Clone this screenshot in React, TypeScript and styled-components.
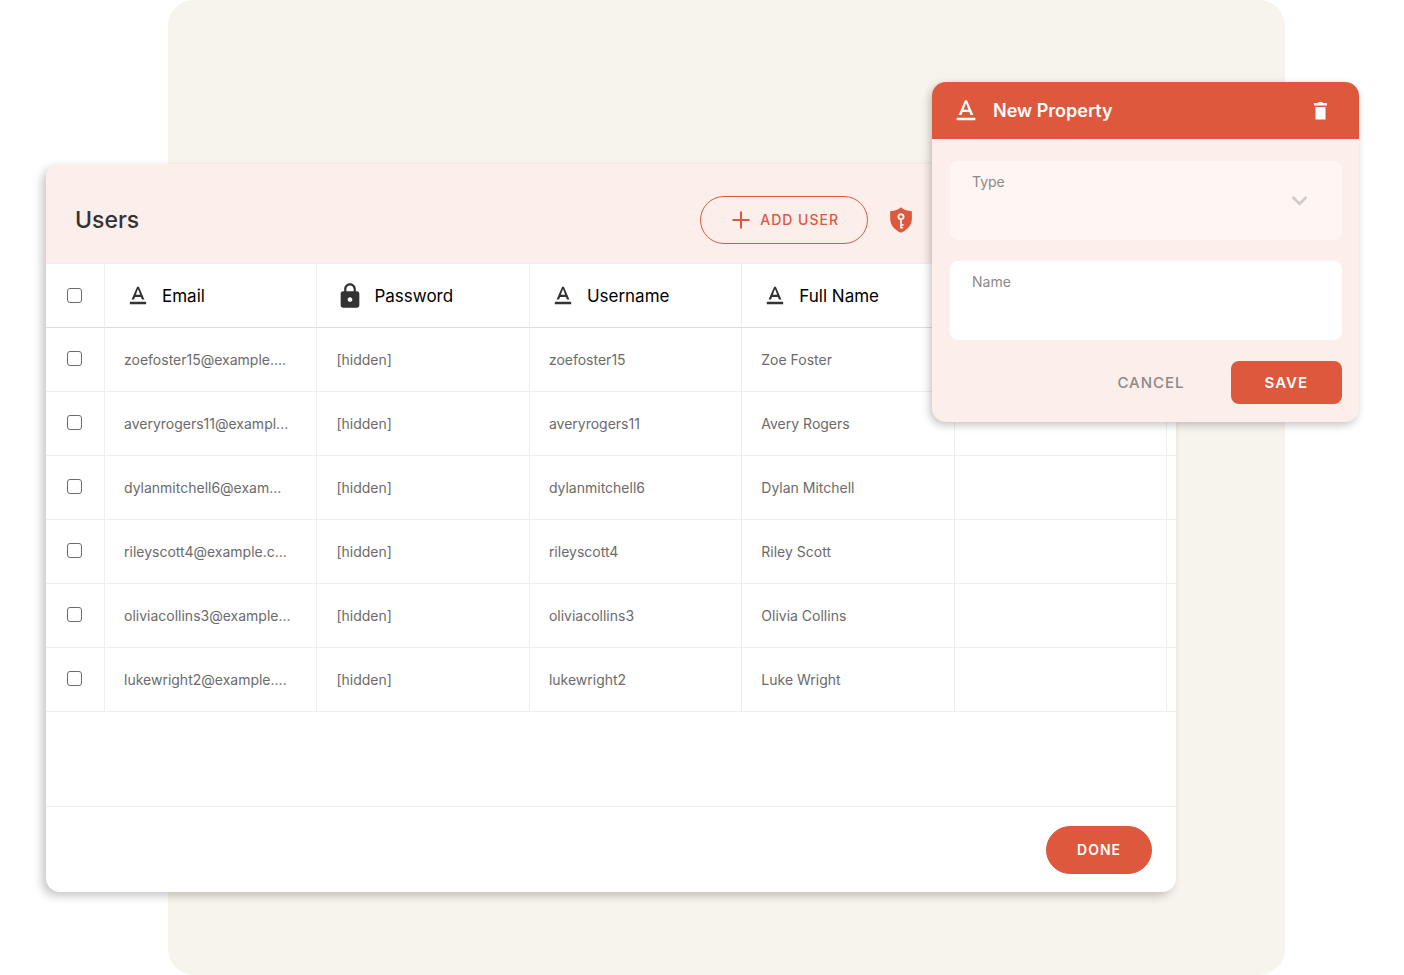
import React from "react";
import styled, { createGlobalStyle } from "styled-components";

const accent = "#de583d";
const blush = "#fceeeb";
const line = "#eeeeee";

const GlobalStyle = createGlobalStyle`
  *, *::before, *::after { box-sizing: border-box; }
  body {
    margin: 0;
    background: #ffffff;
    font-family: Inter, "Liberation Sans", sans-serif;
    font-size: 14px;
    line-height: 20px;
    color: #6b6b6b;
  }
  button, input, select { font: inherit; }
`;

const Stage = styled.main`
  display: grid;
  grid-template-columns: minmax(0, 1fr);
  min-height: 100vh;
  > * { grid-area: 1 / 1; }
`;

const Backdrop = styled.div`
  margin: 0 119px 0 168px;
  border-radius: 26px;
  background: #f7f4ed;
`;

const Panel = styled.section`
  display: flex;
  flex-direction: column;
  margin: 164px 228px 83px 46px;
  border-radius: 14px;
  overflow: hidden;
  background: #ffffff;
  box-shadow: -4px 4px 10px rgba(0, 0, 0, 0.22);
`;

const PanelHeader = styled.header`
  display: flex;
  align-items: center;
  gap: 19px;
  padding: 32px 261px 19px 29px;
  background: ${blush};
  border-bottom: 1px solid ${line};
`;

const PanelTitle = styled.h1`
  flex: 1;
  margin: 0;
  font-size: 23px;
  line-height: 32px;
  font-weight: 500;
  color: #333333;
`;

const PillButton = styled.button<{ $solid?: boolean }>`
  display: inline-flex;
  align-items: center;
  justify-content: center;
  gap: 7px;
  height: 48px;
  padding: 0 ${(p) => (p.$solid ? 30 : 28)}px;
  border: 1px solid ${accent};
  border-radius: 24px;
  background: ${(p) => (p.$solid ? accent : "transparent")};
  color: ${(p) => (p.$solid ? "#ffffff" : accent)};
  font-size: 14px;
  font-weight: ${(p) => (p.$solid ? 600 : 500)};
  letter-spacing: 1px;
  white-space: nowrap;
  cursor: pointer;
`;

const IconButton = styled.button<{ $accent?: boolean }>`
  display: inline-flex;
  padding: 0;
  border: 0;
  background: none;
  color: ${(p) => (p.$accent ? accent : "inherit")};
  cursor: pointer;
`;

const Icon = styled.svg<{ $size: number }>`
  flex: none;
  width: ${(p) => p.$size}px;
  height: ${(p) => p.$size}px;
  fill: currentColor;
`;

const Table = styled.table`
  width: 100%;
  table-layout: fixed;
  border-collapse: separate;
  border-spacing: 0;
`;

const Col = styled.col<{ $width?: string }>`
  width: ${(p) => p.$width ?? "auto"};
`;

const HeadCell = styled.th`
  height: 64px;
  padding: 0 0 0 19px;
  border-right: 1px solid ${line};
  border-bottom: 1px solid #dddddd;
  font-size: 17px;
  font-weight: 400;
  text-align: left;
  color: #000000;
  &:first-child { padding: 0 2px 0 0; }
  &:last-child { padding: 0; border-right: 0; }
`;

const HeadLabel = styled.span`
  display: flex;
  align-items: center;
  gap: 10px;
  white-space: nowrap;
  svg { color: #333333; }
`;

const Cell = styled.td`
  height: 64px;
  padding: 0 0 0 19px;
  border-right: 1px solid ${line};
  border-bottom: 1px solid ${line};
  white-space: nowrap;
  &:first-child { padding: 0 2px 2px 0; }
  &:last-child { padding: 0; border-right: 0; }
`;

const Checkbox = styled.input.attrs({ type: "checkbox" })`
  appearance: none;
  display: block;
  width: 15px;
  height: 15px;
  margin: 0 auto;
  border: 1px solid #6b6b6b;
  border-radius: 3px;
  background: #ffffff;
  &:checked { background: ${accent}; }
`;

const PanelFooter = styled.footer`
  display: flex;
  justify-content: flex-end;
  margin-top: auto;
  padding: 19px 24px 18px;
  border-top: 1px solid ${line};
`;

const Dialog = styled.section`
  display: flex;
  flex-direction: column;
  align-self: start;
  justify-self: end;
  width: 427px;
  margin: 82px 45px 0 0;
  border-radius: 14px;
  overflow: hidden;
  background: ${blush};
  box-shadow: -2px 3px 8px rgba(0, 0, 0, 0.24);
`;

const DialogHeader = styled.header`
  display: flex;
  align-items: center;
  gap: 11px;
  height: 57px;
  padding: 0 27px 0 18px;
  background: ${accent};
  color: #ffffff;
`;

const DialogTitle = styled.h2`
  flex: 1;
  margin: 0;
  font-size: 18px;
  line-height: 24px;
  font-weight: 600;
`;

const DialogForm = styled.form`
  display: flex;
  flex-direction: column;
  gap: 21px;
  padding: 22px 17px 18px 18px;
`;

const Field = styled.label<{ $muted?: boolean }>`
  display: grid;
  grid-template-columns: 1fr 31px;
  align-items: center;
  height: 79px;
  padding: 11px 27px 12px 22px;
  border-radius: 8px;
  background: ${(p) => (p.$muted ? "#fff5f3" : "#ffffff")};
  color: #8a8a8a;
  > span { grid-area: 1 / 1; align-self: start; }
  > input, > select { grid-area: 2 / 1; }
  > svg { grid-area: 1 / 2 / 3 / 3; color: #d3c9c8; }
`;

const TextInput = styled.input`
  width: 100%;
  height: 36px;
  padding: 0;
  border: 0;
  outline: 0;
  background: transparent;
  color: #333333;
`;

const Select = styled.select`
  appearance: none;
  width: 100%;
  height: 36px;
  padding: 0;
  border: 0;
  outline: 0;
  background: transparent;
  color: #333333;
`;

const Actions = styled.div`
  display: flex;
  justify-content: flex-end;
  gap: 12px;
`;

const ActionButton = styled.button<{ $primary?: boolean }>`
  height: 43px;
  padding: 0 34px;
  border: 0;
  border-radius: 8px;
  background: ${(p) => (p.$primary ? accent : "transparent")};
  color: ${(p) => (p.$primary ? "#ffffff" : "#8a8a8a")};
  font-size: 15px;
  font-weight: ${(p) => (p.$primary ? 600 : 500)};
  letter-spacing: 1px;
  cursor: pointer;
`;

const paths = {
  text: "M5 17v2h14v-2H5zm4.5-4.2h5l.9 2.2h2.1L12.75 4h-1.5L6.5 15h2.1l.9-2.2zM12 5.98L13.87 11h-3.74L12 5.98z",
  lock: "M18 8h-1V6c0-2.76-2.24-5-5-5S7 3.24 7 6v2H6c-1.1 0-2 .9-2 2v10c0 1.1.9 2 2 2h12c1.1 0 2-.9 2-2V10c0-1.1-.9-2-2-2zm-6 9c-1.1 0-2-.9-2-2s.9-2 2-2 2 .9 2 2-.9 2-2 2zm3.1-9H8.9V6c0-1.71 1.39-3.1 3.1-3.1s3.1 1.39 3.1 3.1v2z",
  plus: "M11 3.5h2V11h7.5v2H13v7.500h-2V13H3.500v-2H11z",
  shield:
    "M12 1c1.8 1.900 5 3.200 9.300 3.400V11c0 5.500-3.900 9.700-9.300 12-5.400-2.300-9.300-6.500-9.300-12V4.400C7 4.200 10.200 2.900 12 1zm0 5.200a3 3 0 0 0-.8 5.890V19.200h2.600v-1.200h-1v-1h1.400v-1.500h-1.400v-3.410A3 3 0 0 0 12 6.200zm0 1.700a1.300 1.300 0 1 1 0 2.600 1.300 1.300 0 0 1 0-2.600z",
  trash: "M7.500 8h10v12.500h-10zM15 4l-1-1h-3l-1 1H6v2.500h13V4z",
  chevron: "M16.59 8.59L12 13.17 7.41 8.59 6 10l6 6 6-6z",
};

const Glyph = ({ name, size }: { name: keyof typeof paths; size: number }) => (
  <Icon $size={size} viewBox="0 0 24 24" aria-hidden="true">
    <path fillRule="evenodd" d={paths[name]} />
  </Icon>
);

const columns: { label: string; icon: keyof typeof paths }[] = [
  { label: "Email", icon: "text" },
  { label: "Password", icon: "lock" },
  { label: "Username", icon: "text" },
  { label: "Full Name", icon: "text" },
];

const users = [
  ["zoefoster15@example....", "[hidden]", "zoefoster15", "Zoe Foster"],
  ["averyrogers11@exampl...", "[hidden]", "averyrogers11", "Avery Rogers"],
  ["dylanmitchell6@exam...", "[hidden]", "dylanmitchell6", "Dylan Mitchell"],
  ["rileyscott4@example.c...", "[hidden]", "rileyscott4", "Riley Scott"],
  ["oliviacollins3@example...", "[hidden]", "oliviacollins3", "Olivia Collins"],
  ["lukewright2@example....", "[hidden]", "lukewright2", "Luke Wright"],
];

const UsersTable = () => (
  <Table>
    <colgroup>
      <Col $width="59px" />
      {[0, 1, 2, 3, 4].map((n) => (
        <Col key={n} $width="18.8%" />
      ))}
      <Col />
    </colgroup>
    <thead>
      <tr>
        <HeadCell scope="col">
          <Checkbox aria-label="Select all users" />
        </HeadCell>
        {columns.map((c) => (
          <HeadCell key={c.label} scope="col">
            <HeadLabel>
              <Glyph name={c.icon} size={28} />
              {c.label}
            </HeadLabel>
          </HeadCell>
        ))}
        <HeadCell />
        <HeadCell />
      </tr>
    </thead>
    <tbody>
      {users.map((row) => (
        <tr key={row[2]}>
          <Cell>
            <Checkbox aria-label={`Select ${row[3]}`} />
          </Cell>
          {row.map((value, i) => (
            <Cell key={i}>{value}</Cell>
          ))}
          <Cell />
          <Cell />
        </tr>
      ))}
    </tbody>
  </Table>
);

export default function App() {
  return (
    <>
      <GlobalStyle />
      <Stage>
        <Backdrop />
        <Panel>
          <PanelHeader>
            <PanelTitle>Users</PanelTitle>
            <PillButton type="button">
              <Glyph name="plus" size={24} />
              ADD USER
            </PillButton>
            <IconButton type="button" aria-label="Permissions" $accent>
              <Glyph name="shield" size={28} />
            </IconButton>
          </PanelHeader>
          <UsersTable />
          <PanelFooter>
            <PillButton type="button" $solid>
              DONE
            </PillButton>
          </PanelFooter>
        </Panel>
        <Dialog aria-labelledby="property-title">
          <DialogHeader>
            <Glyph name="text" size={32} />
            <DialogTitle id="property-title">New Property</DialogTitle>
            <IconButton type="button" aria-label="Delete property">
              <Glyph name="trash" size={24} />
            </IconButton>
          </DialogHeader>
          <DialogForm>
            <Field $muted htmlFor="property-type">
              <span>Type</span>
              <Select id="property-type" />
              <Glyph name="chevron" size={31} />
            </Field>
            <Field htmlFor="property-name">
              <span>Name</span>
              <TextInput id="property-name" type="text" />
            </Field>
            <Actions>
              <ActionButton type="button">CANCEL</ActionButton>
              <ActionButton type="submit" $primary>
                SAVE
              </ActionButton>
            </Actions>
          </DialogForm>
        </Dialog>
      </Stage>
    </>
  );
}
